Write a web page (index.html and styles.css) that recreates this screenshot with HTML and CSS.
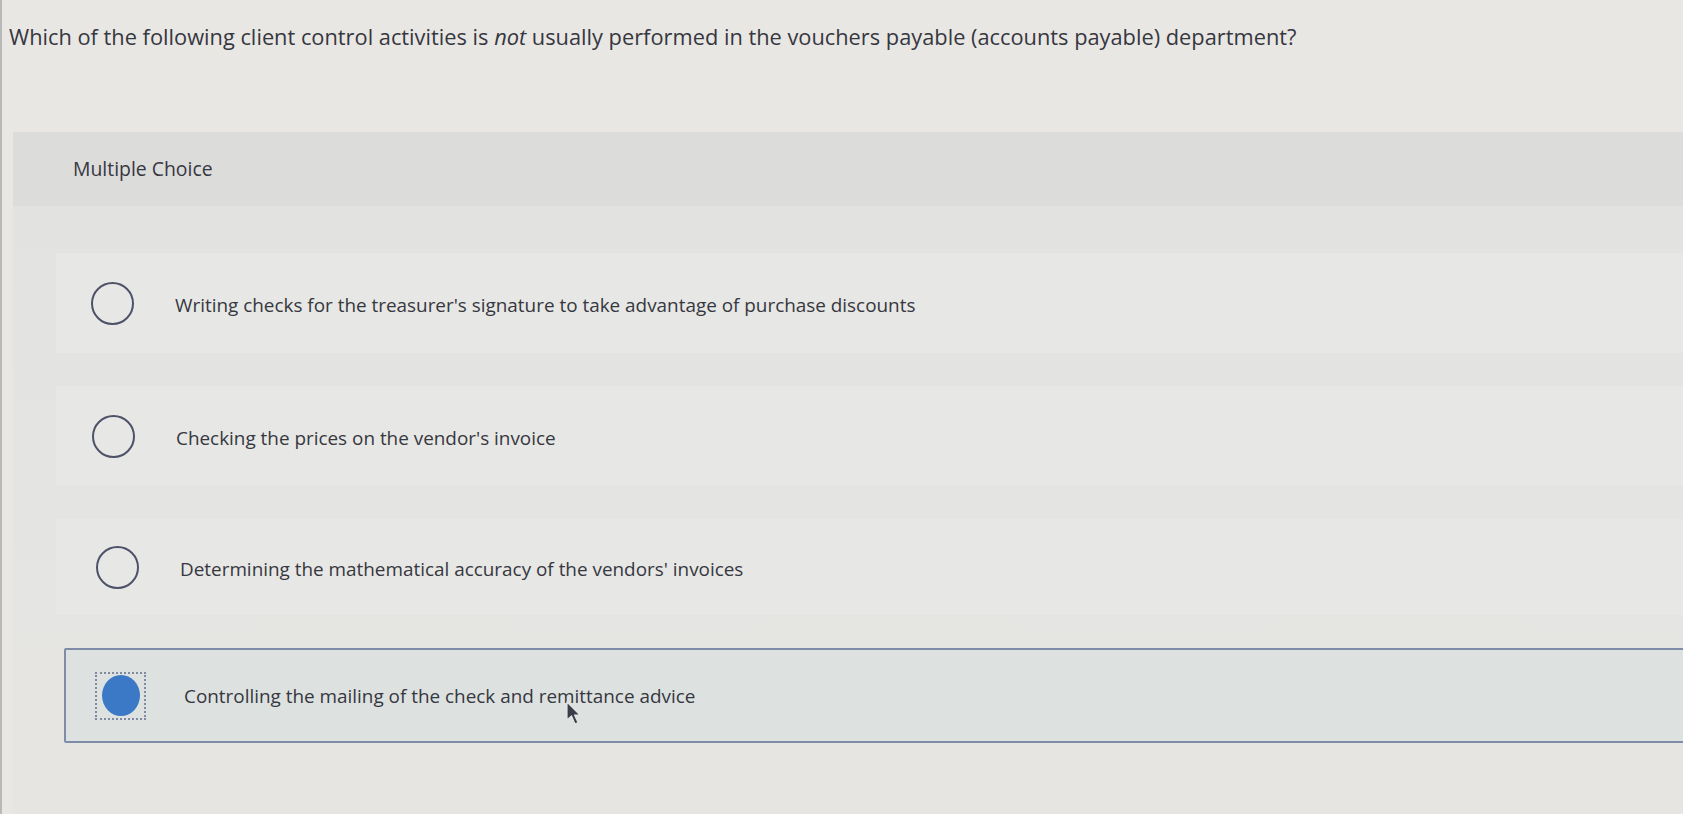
FILE: index.html
```html
<!DOCTYPE html>
<html lang="en">
<head>
<meta charset="utf-8">
<title>Multiple Choice</title>
<link rel="stylesheet" href="styles.css">
</head>
<body>
<div class="page">
  <p class="question">Which of the following client control activities is <em>not</em> usually performed in the vouchers payable (accounts payable) department?</p>
  <section class="panel">
    <div class="panel-header">Multiple Choice</div>
    <div class="options">
      <div class="option">
        <span class="radio"></span>
        <span class="label">Writing checks for the treasurer's signature to take advantage of purchase discounts</span>
      </div>
      <div class="option shift-1">
        <span class="radio"></span>
        <span class="label">Checking the prices on the vendor's invoice</span>
      </div>
      <div class="option shift-2">
        <span class="radio"></span>
        <span class="label">Determining the mathematical accuracy of the vendors' invoices</span>
      </div>
      <div class="option selected">
        <span class="focus"><span class="radio-filled"></span></span>
        <span class="label">Controlling the mailing of the check and remittance advice</span>
        <svg class="cursor" width="16" height="26" viewBox="0 0 16 26" aria-hidden="true">
          <path d="M1 1 L1 19 L5.5 15 L9 23 L12 21.5 L8.5 14 L14 14 Z" fill="#3a3d48" stroke="#e0e4e4" stroke-width="1.2" stroke-linejoin="round"/>
        </svg>
      </div>
    </div>
  </section>
</div>
</body>
</html>
```
FILE: styles.css
```css
* { box-sizing: border-box; }
html, body {
  margin: 0;
  padding: 0;
  height: 100%;
}
body {
  background: #e8e7e4;
  font-family: "Open Sans", "Liberation Sans", sans-serif;
  color: #36373f;
  overflow: hidden;
}
.page {
  width: 1683px;
  height: 814px;
  display: flex;
  flex-direction: column;
  border-left: 2px solid #b9b9b9;
  overflow: hidden;
}
.question {
  margin: 0;
  padding: 22px 0 0 7px;
  height: 132px;
  font-size: 21.8px;
  line-height: 30px;
}
.question em { font-style: italic; }
.panel {
  margin-left: 11px;
  flex: 1;
  background: linear-gradient(180deg, #e2e2e0 0%, #e4e4e2 60%, #e6e5e2 100%);
}
.panel-header {
  height: 74px;
  background: #dcdcdb;
  display: flex;
  align-items: center;
  padding-left: 60px;
  font-size: 19.4px;
  padding-bottom: 2px;
}
.options {
  padding: 47px 0 0 43px;
  display: flex;
  flex-direction: column;
  gap: 33px;
}
.option {
  position: relative;
  height: 100px;
  background: #e7e7e5;
  display: flex;
  align-items: center;
  padding-left: 35px;
  font-size: 18.9px;
}
.option.shift-1 { padding-left: 36px; }
.option.shift-2 { padding-left: 40px; height: 96px; }
.radio {
  flex: none;
  width: 43px;
  height: 43px;
  border: 2px solid #4e5268;
  border-radius: 50%;
}
.label {
  margin-left: 41px;
  padding-top: 3px;
}
.option.selected {
  margin-left: 8px;
  margin-right: -12px;
  height: 95px;
  background: #dde2e1;
  border: 2px solid #7e8ca7;
  border-radius: 2px;
  padding-left: 29px;
}
.focus {
  flex: none;
  width: 51px;
  height: 48px;
  border: 2px dotted #7f8aa0;
  display: flex;
  align-items: center;
  justify-content: center;
}
.radio-filled {
  width: 38px;
  height: 41px;
  border-radius: 50%;
  background: #3b78c6;
}
.selected .label {
  margin-left: 38px;
  padding-top: 0;
}
.cursor {
  position: absolute;
  left: 500px;
  top: 51px;
}
```
